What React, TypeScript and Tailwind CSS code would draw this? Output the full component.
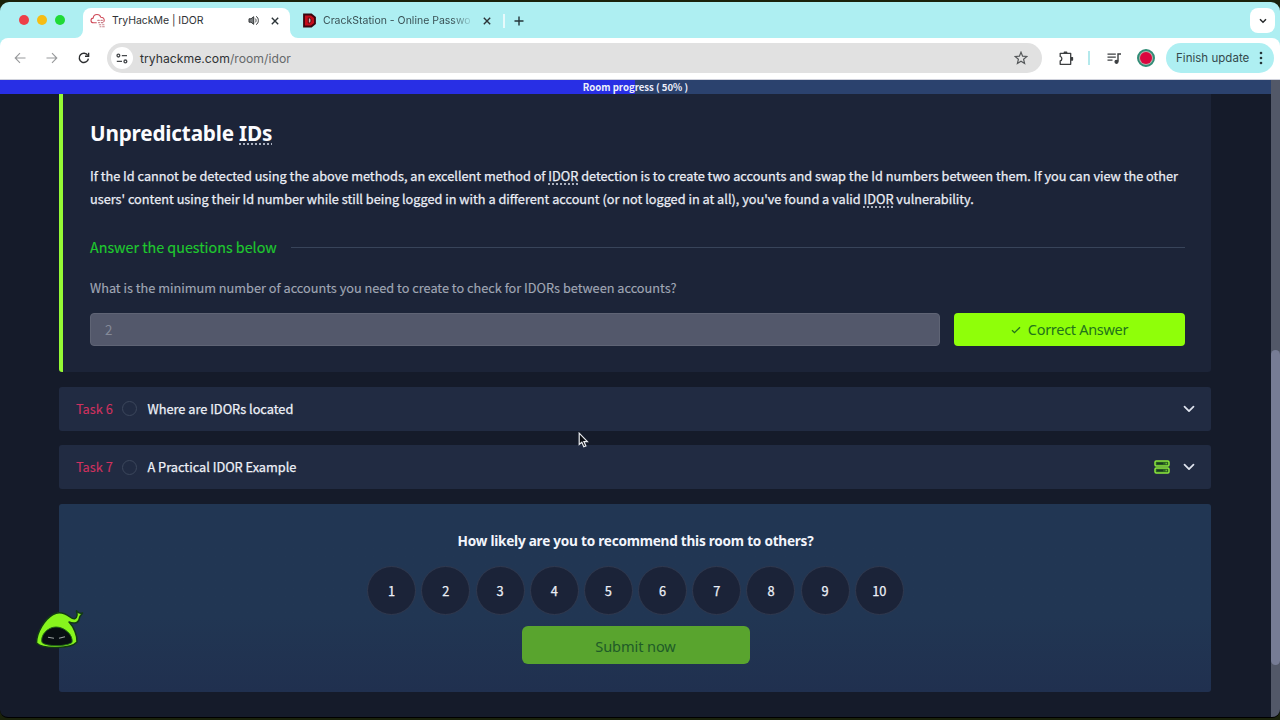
import React from "react";

const body = "font-['Noto_Sans_CJK_SC',sans-serif]";
const head = "font-['Noto_Sans',sans-serif]";

function Chevron() {
  return (
    <svg width="12" height="8" viewBox="0 0 12 8" fill="none" stroke="#dfe4ee" strokeWidth="1.700" strokeLinecap="round" strokeLinejoin="round">
      <path d="M1.500 1.700 6 6.200l4.500-4.500" />
    </svg>
  );
}

function TabClose() {
  return (
    <svg width="8" height="8" viewBox="0 0 8 8" stroke="#2c3438" strokeWidth="1.400">
      <path d="m.8 .8 6.400 6.400M7.200 .8.8 7.200" />
    </svg>
  );
}

function CloudIcon() {
  return (
    <svg width="16" height="16" viewBox="0 0 16 16" fill="none" stroke="#cf4a58" strokeWidth="1.100" strokeLinecap="round" strokeLinejoin="round">
      <path d="M6.300 9.700H3.600C2 9.700 1 8.700 1 7.400 1 6.100 2 5.200 3.200 5.100 3.400 3 5 1.500 7 1.500c1.900 0 3.300 1 3.700 2.700 2-.1 3.500 1.100 3.500 2.900 0 .5-.1.900-.3 1.300" />
      <path d="M7.800 7.400h1.500M11 7.400h1.300M8.500 9.600h1M11.200 9.600h1.800M9.300 11.700h1.500M12.600 11.700h1.400M10 13.800h1M12.600 13.800h1.700" stroke="#c8808a" />
    </svg>
  );
}

function SpeakerIcon() {
  return (
    <svg width="12" height="11" viewBox="0 0 12 11" fill="none" stroke="#36393b" strokeWidth="1">
      <path d="M1 3.800v3.400h2L5.700 9.300V1.700L3 3.800Z" fill="#7a7d80" />
      <path d="M7.300 3.600c1 .8 1 3 0 3.800M8.100 1.400c3 1.400 3 6.800 0 8.200" />
    </svg>
  );
}

function TabStrip() {
  return (
    <div className="flex h-[36px] items-end rounded-t-[9px] bg-[#aeeff2] pr-[5px]">
      <div className="flex h-full w-[83px] items-center gap-[7.500px] pl-[18.500px]">
        <span className="size-[10.500px] rounded-full bg-[#ee3f48]" />
        <span className="size-[10.500px] rounded-full bg-[#f6bd13]" />
        <span className="size-[10.500px] rounded-full bg-[#20da36]" />
      </div>
      <div className="relative flex h-[30px] w-[207px] items-center rounded-t-[8px] bg-white pb-[5px] pl-[7px]">
        <svg className="absolute bottom-0 -left-[8px]" width="8" height="8" viewBox="0 0 8 8"><path d="M8 0v8H0a8 8 0 0 0 8-8" fill="#fff" /></svg>
        <svg className="absolute -right-[8px] bottom-0" width="8" height="8" viewBox="0 0 8 8"><path d="M0 0v8h8a8 8 0 0 1-8-8" fill="#fff" /></svg>
        <CloudIcon />
        <span className="ml-[6px] w-[136px] pt-px text-[10.500px] tracking-[-0.030px] text-[#303335]">TryHackMe | IDOR</span>
        <SpeakerIcon />
        <span className="ml-[11px] flex"><TabClose /></span>
      </div>
      <div className="flex h-[30px] items-center pb-[5px] pl-[13px]">
        <svg width="13" height="15" viewBox="0 0 13 15">
          <path d="M1 1.500h7.300L12 4.500v6l-3.700 3H1Z" fill="#c40d1c" stroke="#3a0710" strokeWidth="1.800" />
          <path d="M5.300 5v5h1.200L8 8.700V6.300L6.500 5Z" fill="#d9adb4" stroke="#55060f" />
        </svg>
        <span className="ml-[7px] w-[149px] bg-linear-to-r from-[#354b4f] from-86% to-[#9fdde0] bg-clip-text text-[10.500px] leading-[16px] whitespace-nowrap text-transparent">
          CrackStation - Online Passwo
        </span>
        <span className="ml-[11px] flex"><TabClose /></span>
        <span className="ml-[12px] h-[14px] w-[2px] bg-white/70" />
        <svg className="ml-[9px]" width="10" height="10" viewBox="0 0 10 10" stroke="#24363a" strokeWidth="1.400"><path d="M5 .5v9M.5 5h9" /></svg>
      </div>
      <div className="mb-[5px] ml-auto flex size-[25px] items-center justify-center rounded-[8px] bg-white">
        <svg width="8" height="6" viewBox="0 0 8 6" fill="none" stroke="#25282a" strokeWidth="1.500"><path d="m1 1.200 3 3 3-3" /></svg>
      </div>
    </div>
  );
}

function Toolbar() {
  return (
    <div className="bg-[#aeeff2]">
      <div className="flex h-[42px] items-center rounded-t-[8px] border-b border-[#d0d2dc] bg-white pr-[6px] pb-[1px] pl-[14px]">
        <svg width="12" height="12" viewBox="0 0 12 12" fill="none" stroke="#97999b" strokeWidth="1.100"><path d="M11.500 6H1.200M6 1.200 1.200 6 6 10.800" /></svg>
        <svg className="ml-[20px]" width="12" height="12" viewBox="0 0 12 12" fill="none" stroke="#97999b" strokeWidth="1.100"><path d="M.5 6h10.300M6 1.200 10.800 6 6 10.800" /></svg>
        <svg className="ml-[20px]" width="12" height="12" viewBox="0 0 12 12" fill="none" stroke="#2c2e30" strokeWidth="1.400"><path d="M9.800 3.500A4.600 4.600 0 1 0 10.400 6.600" /><path d="M10.600 .8v3.500H7" /></svg>
        <div className="ml-[17px] flex h-[30px] w-[935px] items-center rounded-full bg-[#e1e1e1] pl-[4px]">
          <span className="flex size-[22px] items-center justify-center rounded-full bg-white">
            <svg width="12" height="11" viewBox="0 0 12 11" fill="none" stroke="#46494c" strokeWidth="1.300"><circle cx="2.400" cy="2.600" r="1.400" /><path d="M5.800 2.600H11M.8 8.400H6" /><circle cx="9.400" cy="8.400" r="1.400" /></svg>
          </span>
          <span className="ml-[7px] pt-[2px] text-[12.200px] tracking-[0.020px] text-[#2f3234]">tryhackme.com<span className="text-[#66696b]">/room/idor</span></span>
          <svg className="mr-[14px] ml-auto" width="14" height="14" viewBox="0 0 14 14" fill="none" stroke="#55585a" strokeWidth="1.200"><path d="m7 1.200 1.600 4 4.300.3-3.300 2.800 1 4.200L7 10.200l-3.600 2.300 1-4.200L1.100 5.500l4.300-.3Z" /></svg>
        </div>
        <svg className="ml-[17px]" width="15" height="15" viewBox="0 0 15 15" fill="none" stroke="#3c3e40" strokeWidth="1.300" strokeLinejoin="round"><path d="M1.200 2.300h10.500v11H1.200V10c2.200-.6 2.200-4 0-4.600Z" /><path d="M5.300 2V1.200h2.400V2M12 6.600h1.500v2.400H12" fill="#303234" /></svg>
        <span className="ml-[14px] h-[14px] w-[1.500px] bg-[#b4e9ec]" />
        <svg className="ml-[17px]" width="15" height="13" viewBox="0 0 15 13" fill="none" stroke="#3c3f41" strokeWidth="1.200"><path d="M.5 2.200h8.300M.5 5.200h8.300M.5 8.200h5" /><path d="M11 9.500V2h3" strokeWidth="1.400" /><circle cx="9.500" cy="9.800" r="1.500" fill="#3c3f41" /></svg>
        <span className="ml-[15px] flex size-[18px] items-center justify-center rounded-full border-2 border-[#318d77] bg-[#b9aca9]"><span className="size-[12px] rounded-full bg-[#dc063f]" /></span>
        <div className="ml-auto flex h-[30px] w-[108px] items-center rounded-full bg-[#aeeff2] pl-[10px]">
          <span className="pt-[2px] text-[11.500px] tracking-[0.030px] whitespace-nowrap text-[#34494c]">Finish update</span>
          <svg className="mr-[11px] ml-auto" width="4" height="14" viewBox="0 0 4 14" fill="#263538"><circle cx="2" cy="2" r="1.300" /><circle cx="2" cy="7" r="1.300" /><circle cx="2" cy="12" r="1.300" /></svg>
        </div>
      </div>
    </div>
  );
}

function Task({ n, title, machine }: { n: number; title: string; machine?: boolean }) {
  return (
    <div className="flex h-[44px] items-center rounded-[3px] bg-[#212b42] pr-[16px] pl-[17px] text-[12.750px]">
      <span className="w-[46px] pt-px text-[#cf315f] [-webkit-text-stroke:0.150px]">Task {n}</span>
      <span className="size-[15px] rounded-full border-[1.500px] border-[#3c475c]" />
      <span className="ml-[10.500px] pt-px text-[#eef1f8] [-webkit-text-stroke:0.250px]">{title}</span>
      <span className="ml-auto flex items-center gap-[13px]">
        {machine && (
          <svg width="16" height="14" viewBox="0 0 16 14" fill="#2c6123" stroke="#8be83c" strokeWidth="1.500"><rect x="1" y="1" width="14" height="5" rx="1.200" /><rect x="1" y="8" width="14" height="5" rx="1.200" /><path d="M3 3.500h6M3 10.500h6" stroke="#173b22" /><path d="M11.500 3.500h1.500M11.500 10.500h1.500" stroke="#63b832" /></svg>
        )}
        <Chevron />
      </span>
    </div>
  );
}

const dotted = "underline decoration-[#a9afbd] decoration-dotted decoration-[1.500px] underline-offset-[2px]";

export default function App() {
  return (
    <div className="relative h-[720px] w-[1280px] overflow-hidden bg-[#1a220b] pt-[2px] font-['Inter',sans-serif] leading-none">
      <TabStrip />
      <Toolbar />
      <div className="flex h-[638px] rounded-b-[8px] border-b border-black bg-[#151b2a]">
        <div className="flex w-[1271px] flex-col">
          <div className={`${body} flex h-[14px] items-center justify-center bg-linear-to-r from-[#282fe5] from-50% to-[#2b426e] to-50% pt-px text-[9.600px] font-bold text-[#edf0fb]`}>
            <span>Room progress ( 50% )</span>
          </div>
          <main className={`${body} ml-[59px] flex w-[1152px] flex-col gap-[14.500px]`}>
            <section className="h-[278px] rounded-b-[3px] border-l-4 border-[#95fa35] bg-[#1c2438] pr-[26px] pl-[27px]">
              <h2 className={`${head} pt-[27px] text-[20.700px] leading-[24px] font-bold tracking-[-0.180px] text-[#fbfcff]`}>
                Unpredictable <span className={dotted}>IDs</span>
              </h2>
              <p className="mt-[19px] text-[12.730px] leading-[23px] whitespace-nowrap text-[#ebeef6] [-webkit-text-stroke:0.250px]">
                If the Id cannot be detected using the above methods, an excellent method of <span className={dotted}>IDOR</span> detection is to create two accounts and swap the Id numbers between them. If you can view the other
                <br />
                users' content using their Id number while still being logged in with a different account (or not logged in at all), you've found a valid <span className={dotted}>IDOR</span> vulnerability.
              </p>
              <div className="mt-[25px] flex h-[24px] items-center gap-[14px] text-[14.300px] text-[#1fc92f] [-webkit-text-stroke:0.150px]">
                <span>Answer the questions below</span>
                <span className="h-px flex-1 bg-[#38445a]" />
              </div>
              <p className="mt-[18px] text-[12.730px] leading-[22px] text-[#a0a7b5] [-webkit-text-stroke:0.150px]">What is the minimum number of accounts you need to create to check for IDORs between accounts?</p>
              <div className="mt-[14px] flex gap-[14px]">
                <div className="flex h-[33px] w-[850px] items-center rounded-[4px] border border-[#5f6475] bg-[#53586b] pt-px pl-[14px] text-[13.300px] text-[#858a99]">2</div>
                <div className={`${head} flex h-[33px] flex-1 items-center justify-center gap-[7px] rounded-[4px] bg-[#8fff09] text-[14.500px] tracking-[-0.300px] text-[#22731b]`}>
                  <svg width="10" height="8" viewBox="0 0 10 8" fill="none" stroke="#22731b" strokeWidth="1.300"><path d="m1 4.300 2.500 2.400L9 1.200" /></svg>
                  <span>Correct Answer</span>
                </div>
              </div>
            </section>
            <Task n={6} title="Where are IDORs located" />
            <Task n={7} title="A Practical IDOR Example" machine />
            <section className="flex h-[188px] flex-col items-center rounded-[3px] bg-linear-to-b from-[#213653] from-60% to-[#20304f] pt-[26px] pl-px">
              <h3 className={`${head} text-[13.600px] leading-[22px] font-bold tracking-[-0.240px] text-[#f2f5fc]`}>How likely are you to recommend this room to others?</h3>
              <div className="mt-[14px] flex gap-[5.200px]">
                {[1, 2, 3, 4, 5, 6, 7, 8, 9, 10].map((n) => (
                  <span key={n} className="flex size-[49px] items-center justify-center rounded-full border border-[#30394f] bg-[#1b2338] pt-[2px] text-[12.800px] text-[#eceff7] [-webkit-text-stroke:0.250px]">{n}</span>
                ))}
              </div>
              <div className={`${head} mt-[11px] flex h-[38px] w-[228px] items-center justify-center rounded-[6px] bg-[#59a42e] pt-[3px] text-[14.600px] tracking-[-0.100px] text-[#205b28]`}>Submit now</div>
            </section>
          </main>
        </div>
        <div className="flex w-[9px] flex-col overflow-hidden rounded-br-[8px] bg-[#525868] pt-[270px]">
          <div className="h-[315px] rounded-full bg-[#767c95]" />
        </div>
      </div>
      <svg className="absolute top-[609px] left-[34px]" width="52" height="42" viewBox="0 0 52 42">
        <path d="M2.500 34C2.500 23 11 10 19 5.500c5-3 11-2 17 2.500 4 3 6.500 2 7-1.500C43.500 3.500 42 3 42.500 1.800 44 3 44.500 5 48.500 4 47.500 6.500 46 6 45.500 9c-.6 3-2.500 5.200-5.500 5-1.500 0-3.500-.3-5-1C40 18 43.500 27 43 33c-6 7-34 7.500-40.500 1Z" fill="#87f51d" stroke="#123a16" strokeWidth="1.500" strokeLinejoin="round" />
        <path d="M8 33.500c-2-7 5.500-15.500 14-15.500s17.500 8 16 15.500c-5 4-25 4.500-30 0Z" fill="#080f12" stroke="#216b16" />
        <path d="m14 28.300 6 .9M25 29.300l6-1.500" stroke="#99a09f" strokeWidth="1.100" fill="none" />
      </svg>
      <svg className="absolute top-[432px] left-[578px]" width="13" height="17" viewBox="0 0 13 17">
        <path d="M1.200 1.200v11.300l2.600-2.300 2 4.600 2.100-.9-2-4.300h3.500Z" fill="#0b0d13" stroke="#e9ebef" strokeWidth="1.200" />
      </svg>
    </div>
  );
}
